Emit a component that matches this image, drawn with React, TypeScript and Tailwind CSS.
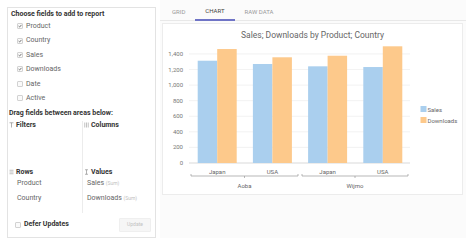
import React from "react";

const fields = [
  { name: "Product", checked: true },
  { name: "Country", checked: true },
  { name: "Sales", checked: true },
  { name: "Downloads", checked: true },
  { name: "Date", checked: false },
  { name: "Active", checked: false },
];

const data = [
  { product: "Aoba", country: "Japan", sales: 1313, downloads: 1463 },
  { product: "Aoba", country: "USA", sales: 1271, downloads: 1357 },
  { product: "Wijmo", country: "Japan", sales: 1241, downloads: 1377 },
  { product: "Wijmo", country: "USA", sales: 1232, downloads: 1498 },
];

function Check({ checked }: { checked: boolean }) {
  return (
    <span className="flex h-[6px] w-[6px] items-center justify-center rounded-[1px] border border-[#d2d2d2] bg-[#fafafa]">
      {checked && (
        <svg width="4" height="4" viewBox="0 0 10 10">
          <path d="M1.5 5.2 L4 7.6 L8.6 2.2" fill="none" stroke="#555" strokeWidth="2" />
        </svg>
      )}
    </span>
  );
}

function AreaIcon({ kind }: { kind: "filter" | "cols" | "rows" | "values" }) {
  return (
    <svg width="5" height="6" viewBox="0 0 10 12" className="shrink-0">
      {kind === "filter" && <path d="M1 1.5 H9 M5 1.5 V11" stroke="#888" strokeWidth="1.3" fill="none" />}
      {kind === "cols" && <path d="M1.5 1 V11 M5 1 V11 M8.5 1 V11" stroke="#999" strokeWidth="1.2" fill="none" />}
      {kind === "rows" && <path d="M1 2.5 H9 M1 6 H9 M1 9.5 H9" stroke="#999" strokeWidth="1.2" fill="none" />}
      {kind === "values" && <path d="M2 1.5 H8 M5 1.5 V10.5 M2 10.5 H8" stroke="#888" strokeWidth="1.3" fill="none" />}
    </svg>
  );
}

function FieldPanel() {
  return (
    <div className="mt-[7px] ml-[7px] flex h-[231px] w-[149px] flex-col border border-[#e3e3e3] bg-white text-[#666]">
      <div className="h-[11px] pt-[2px] pl-[3px] text-[7px] leading-[9px] font-bold text-[#333]">
        Choose fields to add to report
      </div>
      {fields.map((f) => (
        <div key={f.name} className="flex h-[14.4px] items-center gap-[3px] pl-[9px] text-[7px]">
          <Check checked={f.checked} />
          <span>{f.name}</span>
        </div>
      ))}
      <div className="h-[16px] pl-[1px] text-[7px] leading-[16px] font-bold text-[#333]">
        Drag fields between areas below:
      </div>
      <div className="grid h-[92px] grid-cols-[75px_1fr] grid-rows-[46px_46px] text-[7px]">
        <div className="border-r border-[#ececec] pl-[1px]">
          <div className="flex h-[8px] items-center gap-[2px] font-bold text-[#333]">
            <AreaIcon kind="filter" />
            Filters
          </div>
        </div>
        <div className="pl-[1px]">
          <div className="flex h-[8px] items-center gap-[2px] font-bold text-[#333]">
            <AreaIcon kind="cols" />
            Columns
          </div>
        </div>
        <div className="border-r border-[#ececec] pl-[1px]">
          <div className="flex h-[9px] items-center gap-[2px] font-bold text-[#333]">
            <AreaIcon kind="rows" />
            Rows
          </div>
          <div className="h-[15px] pl-[8px] leading-[15px]">Product</div>
          <div className="h-[15px] pl-[8px] leading-[15px]">Country</div>
        </div>
        <div className="pl-[1px]">
          <div className="flex h-[9px] items-center gap-[2px] font-bold text-[#333]">
            <AreaIcon kind="values" />
            Values
          </div>
          <div className="h-[15px] pl-[3px] leading-[15px]">
            Sales <span className="text-[5px] text-[#c0c0c0]">(Sum)</span>
          </div>
          <div className="h-[15px] pl-[3px] leading-[15px]">
            Downloads <span className="text-[5px] text-[#c0c0c0]">(Sum)</span>
          </div>
        </div>
      </div>
      <div className="flex flex-1 items-center justify-between pr-[4px] pb-[1px] pl-[7px]">
        <div className="flex items-center gap-[3px] text-[7px] font-bold text-[#333]">
          <Check checked={false} />
          <span>Defer Updates</span>
        </div>
        <button className="h-[14px] w-[32px] rounded-[1px] border border-[#efefef] bg-[#f6f6f6] text-[5px] text-[#c2c2c2]">
          Update
        </button>
      </div>
    </div>
  );
}

const toY = (v: number) => 118 - v * 0.0779;

function Chart() {
  const ticks = [0, 200, 400, 600, 800, 1000, 1200, 1400];
  return (
    <svg width="299" height="148" className="block" style={{ fontFamily: "Roboto, sans-serif" }}>
      {ticks.map((t) => (
        <g key={t}>
          <line x1="26" x2="247" y1={toY(t)} y2={toY(t)} stroke={t === 0 ? "#cfcfcf" : "#efefef"} strokeWidth="0.8" />
          <text x="20" y={toY(t) + 2} fontSize="6" fill="#777" textAnchor="end">
            {t.toLocaleString("en-US")}
          </text>
        </g>
      ))}
      {data.map((d, i) => {
        const x = 34.7 + i * 55.2;
        return (
          <g key={i}>
            <rect x={x} y={toY(d.sales)} width="19.5" height={118 - toY(d.sales)} fill="#aacfee" />
            <rect x={x + 19.5} y={toY(d.downloads)} width="19.5" height={118 - toY(d.downloads)} fill="#fdc98b" />
            <text x={x + 19.5} y="128.5" fontSize="6" fill="#666" textAnchor="middle">
              {d.country}
            </text>
          </g>
        );
      })}
      {[
        { label: "Aoba", x1: 28, x2: 135 },
        { label: "Wijmo", x1: 139, x2: 245 },
      ].map((g) => (
        <g key={g.label} stroke="#999" strokeWidth="0.7" fill="none">
          <path d={`M${g.x1} 129 V131 H${g.x2} V129 M${(g.x1 + g.x2) / 2} 131 V133`} />
          <text x={(g.x1 + g.x2) / 2} y="142.5" fontSize="6" fill="#666" stroke="none" textAnchor="middle">
            {g.label}
          </text>
        </g>
      ))}
      <rect x="257.5" y="61" width="6" height="6" fill="#aacfee" />
      <text x="264.5" y="66.5" fontSize="6" fill="#666">
        Sales
      </text>
      <rect x="257.5" y="72" width="6" height="6" fill="#fdc98b" />
      <text x="264.5" y="77.5" fontSize="6" fill="#666">
        Downloads
      </text>
    </svg>
  );
}

function ReportView() {
  const tabs = ["GRID", "CHART", "RAW DATA"];
  return (
    <div className="ml-[4px] flex h-[238px] w-[306px] flex-col bg-[#fbfbfb]">
      <div className="flex h-[21px] border-b border-[#e8e8e8] pl-[2px]">
        {tabs.map((t) => (
          <div
            key={t}
            className={
              t === "CHART"
                ? "flex h-[21px] items-center border-b-2 border-[#6f74c6] px-[10px] pt-[2px] text-[6px] text-[#444]"
                : "flex h-[21px] items-center px-[10px] pt-[2px] text-[6px] text-[#9a9a9a]"
            }
          >
            {t}
          </div>
        ))}
      </div>
      <div className="mt-[2px] ml-[2px] h-[172px] w-[301px] border border-[#ececec] bg-white">
        <div className="h-[21px] pt-[1px] text-center text-[8.5px] leading-[20px] text-[#666]">
          Sales; Downloads by Product; Country
        </div>
        <Chart />
      </div>
    </div>
  );
}

export default function App() {
  return (
    <div className="flex h-[245px] w-[474px] bg-white font-['Roboto',sans-serif]">
      <FieldPanel />
      <ReportView />
    </div>
  );
}
